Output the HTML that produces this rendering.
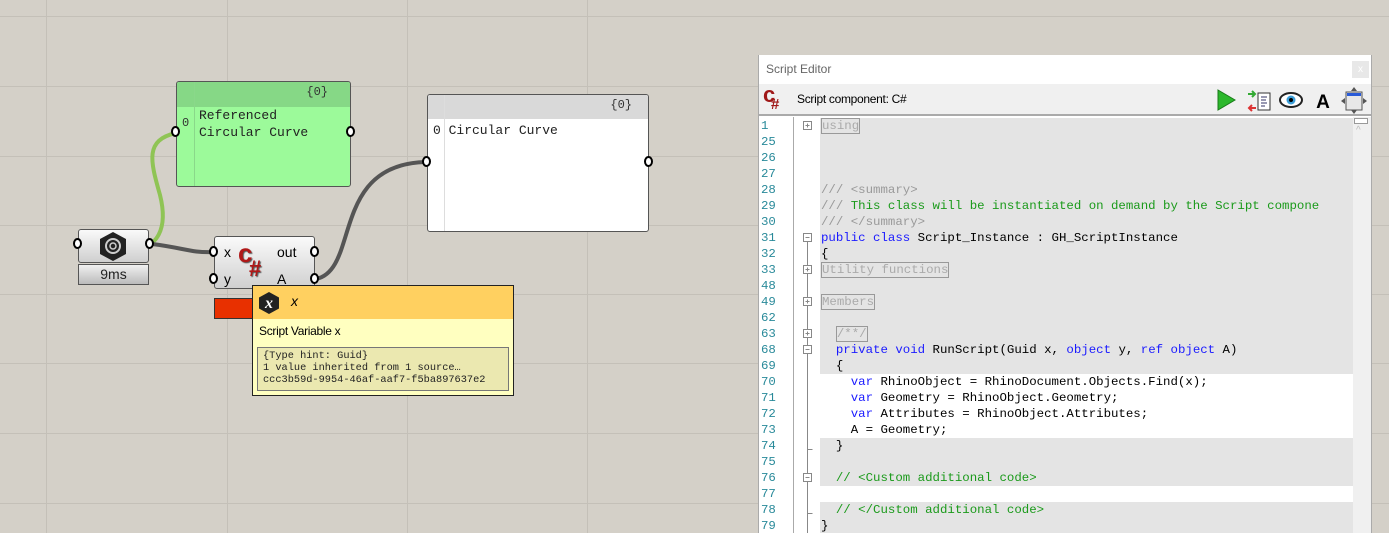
<!DOCTYPE html>
<html><head><style>
*{margin:0;padding:0;box-sizing:border-box}
html,body{width:1389px;height:533px;overflow:hidden}
body{background:#d4d0c8;position:relative;font-family:"Liberation Sans",sans-serif}
.a{position:absolute}
.mono{font-family:"Liberation Mono",monospace}
.code{position:absolute;left:820px;top:118px;width:533px;height:415px;overflow:hidden;font-family:"Liberation Mono",monospace;font-size:12.4px;line-height:16px;color:#000}
.code div{height:16px;background:#e4e4e4;padding-left:1px;white-space:pre;overflow:hidden}
.code div.w{background:#fff}
.ln{position:absolute;left:761px;top:118px;font-family:"Liberation Mono",monospace;font-size:12.4px;line-height:16px;color:#2a8a9a;white-space:pre}
.k{color:#1a1aff}.c{color:#1a9a1a}.g{color:#999}
.box{border:1px solid #999;color:#aaa}
.port{position:absolute;width:9px;height:11px;border:2px solid #000;border-radius:50%;background:#fff}
</style></head><body>
<div class="a" style="left:0;top:16px;width:1389px;height:1px;background:#c4c0b8"></div>
<div class="a" style="left:0;top:86px;width:1389px;height:1px;background:#c4c0b8"></div>
<div class="a" style="left:0;top:156px;width:1389px;height:1px;background:#c4c0b8"></div>
<div class="a" style="left:0;top:225px;width:1389px;height:1px;background:#c4c0b8"></div>
<div class="a" style="left:0;top:294px;width:1389px;height:1px;background:#c4c0b8"></div>
<div class="a" style="left:0;top:363px;width:1389px;height:1px;background:#c4c0b8"></div>
<div class="a" style="left:0;top:433px;width:1389px;height:1px;background:#c4c0b8"></div>
<div class="a" style="left:0;top:503px;width:1389px;height:1px;background:#c4c0b8"></div>
<div class="a" style="left:46px;top:0;width:1px;height:533px;background:#c4c0b8"></div>
<div class="a" style="left:227px;top:0;width:1px;height:533px;background:#c4c0b8"></div>
<div class="a" style="left:407px;top:0;width:1px;height:533px;background:#c4c0b8"></div>
<div class="a" style="left:587px;top:0;width:1px;height:533px;background:#c4c0b8"></div>

<svg class="a" style="left:0;top:0" width="760" height="533">
<path d="M176 133 C145 140 150 160 160 195 C170 235 150 244 150 244" stroke="#8fc455" stroke-width="4" fill="none"/>
<path d="M152 244 C185 248 190 253 214 252" stroke="#555" stroke-width="4" fill="none"/>
<path d="M316 279 C360 270 330 165 425 162" stroke="#555" stroke-width="4" fill="none"/>
</svg>

<div class="a" style="left:176px;top:81px;width:175px;height:106px;background:#9cfa9a;border:1px solid #555;border-radius:3px;overflow:hidden">
 <div style="height:25px;background:#86d886;text-align:right;padding-right:22px;font:12px 'Liberation Mono',monospace;line-height:20px;color:#333">{0}</div>
 <div class="a" style="left:17px;top:0;width:1px;height:106px;background:#8ad88a"></div>
 <div class="a mono" style="left:5px;top:34px;font-size:12px;color:#333">0</div>
 <div class="a mono" style="left:22px;top:25px;font-size:13px;line-height:17px;color:#222">Referenced<br>Circular Curve</div>
</div>
<div class="port" style="left:171px;top:126px"></div>
<div class="port" style="left:346px;top:126px"></div>

<div class="a" style="left:427px;top:94px;width:222px;height:138px;background:#fff;border:1px solid #555;border-radius:3px;overflow:hidden">
 <div style="height:24px;background:#d9d9d9;text-align:right;padding-right:16px;font:12px 'Liberation Mono',monospace;line-height:20px;color:#333">{0}</div>
 <div class="a" style="left:16px;top:0;width:1px;height:138px;background:#ddd"></div>
 <div class="a mono" style="left:5px;top:28px;font-size:13px;color:#222">0 Circular Curve</div>
</div>
<div class="port" style="left:422px;top:156px"></div>
<div class="port" style="left:644px;top:156px"></div>

<div class="a" style="left:78px;top:229px;width:71px;height:34px;background:linear-gradient(#fafafa,#cfcfcf);border:1px solid #555;border-radius:3px"></div>
<svg class="a" style="left:96px;top:230px" width="34" height="34"><polygon points="17,2 30,9 30,24 17,31 4,24 4,9" fill="#222"/><circle cx="17" cy="16" r="7" fill="none" stroke="#ccc" stroke-width="2"/><circle cx="17" cy="16" r="3" fill="none" stroke="#ccc" stroke-width="1.5"/></svg>
<div class="a" style="left:78px;top:264px;width:71px;height:21px;background:linear-gradient(#f0f0f0,#bbb);border:1px solid #555;text-align:center;font-size:14px;line-height:19px;color:#222">9ms</div>
<div class="port" style="left:73px;top:238px"></div>
<div class="port" style="left:145px;top:238px"></div>

<div class="a" style="left:214px;top:236px;width:101px;height:53px;background:linear-gradient(#fafafa,#d0d0d0);border:1px solid #555;border-radius:3px"></div>
<div class="a" style="left:224px;top:244px;font-size:14px">x</div>
<div class="a" style="left:224px;top:271px;font-size:14px">y</div>
<div class="a" style="left:277px;top:244px;font-size:14px">out</div>
<div class="a" style="left:277px;top:271px;font-size:14px">A</div>
<div class="a" style="left:238px;top:238px;font:bold 26px 'Liberation Sans';color:#b01818;text-shadow:1px 1px 1px #555">c</div>
<div class="a" style="left:249px;top:256px;font:bold 22px 'Liberation Sans';color:#b01818;text-shadow:1px 1px 1px #555">#</div>
<div class="port" style="left:209px;top:246px"></div>
<div class="port" style="left:209px;top:273px"></div>
<div class="port" style="left:310px;top:246px"></div>
<div class="port" style="left:310px;top:273px"></div>
<div class="a" style="left:214px;top:298px;width:50px;height:21px;background:#e83000;border:1px solid #333"></div>

<div class="a" style="left:252px;top:285px;width:262px;height:111px;background:#ffffc0;border:1px solid #222">
 <div style="height:33px;background:#ffd060"></div>
 <svg class="a" style="left:4px;top:5px" width="24" height="24"><polygon points="12,1 22,6.5 22,17.5 12,23 2,17.5 2,6.5" fill="#222"/><text x="12" y="17" text-anchor="middle" font-family="Liberation Serif" font-style="italic" font-weight="bold" font-size="16" fill="#fff">x</text></svg>
 <div class="a" style="left:38px;top:7px;font-style:italic;font-size:14px">x</div>
 <div class="a" style="left:6px;top:38px;font-size:12px;letter-spacing:-0.3px">Script Variable x</div>
 <div class="a mono" style="left:4px;top:61px;width:252px;height:44px;background:#ebe8b0;border:1px solid #777;font-size:10.3px;line-height:12px;padding:2px 5px;white-space:pre;color:#222">{Type hint: Guid}
1 value inherited from 1 source…
ccc3b59d-9954-46af-aaf7-f5ba897637e2</div>
</div>

<div class="a" style="left:758px;top:55px;width:614px;height:478px;background:#fff;border-left:1px solid #aaa;border-right:1px solid #aaa"></div>
<div class="a" style="left:766px;top:62px;font-size:12px;color:#666">Script Editor</div>
<div class="a" style="left:1352px;top:61px;width:17px;height:17px;background:#e8e8e8;color:#fff;font-size:10px;text-align:center;line-height:17px">x</div>
<div class="a" style="left:759px;top:84px;width:612px;height:32px;background:#f0f0f0;border-bottom:2px solid #aaa"></div>
<div class="a" style="left:763px;top:82px;font:bold 22px 'Liberation Sans';color:#a01818">c</div>
<div class="a" style="left:771px;top:96px;font:bold 15px 'Liberation Sans';color:#a01818">#</div>
<div class="a" style="left:797px;top:92px;font-size:12px;letter-spacing:-0.3px">Script component: C#</div>
<svg class="a" style="left:1214px;top:86px" width="160" height="28">
 <polygon points="4,4 21,14 4,24" fill="#2cb82c" stroke="#1a7a1a"/>
 <rect x="44" y="7" width="12" height="17" fill="#fff" stroke="#333"/>
 <path d="M47 11h6M47 14h5M47 17h6M47 20h4" stroke="#336"/>
 <path d="M34 8h7M38 5l3 3-3 3" stroke="#3a3" stroke-width="2" fill="none"/>
 <path d="M42 22h-7M38 19l-3 3 3 3" stroke="#d33" stroke-width="2" fill="none"/>
 <ellipse cx="77" cy="14" rx="11" ry="7" fill="#fff" stroke="#222" stroke-width="2"/>
 <circle cx="77" cy="14" r="4.5" fill="#3b9ed8"/><circle cx="77" cy="14" r="2" fill="#000"/>
 <text x="109" y="22" text-anchor="middle" font-family="Liberation Sans" font-weight="bold" font-size="19">A</text>
 <rect x="132" y="6" width="16" height="18" fill="#e8e8e8" stroke="#555"/><rect x="133" y="7" width="14" height="3" fill="#2a5bd8"/>
 <path d="M140 1l-3 4h6zM140 28l-3-4h6zM127 15l4-3v6zM153 15l-4-3v6z" fill="#555"/>
</svg>
<div class="a" style="left:793px;top:117px;width:1px;height:416px;background:#aaa"></div>
<div class="a" style="left:1353px;top:117px;width:18px;height:416px;background:#f0f0f0"></div>
<div class="a" style="left:1354px;top:118px;width:14px;height:6px;border:1px solid #999;background:#fff"></div>
<div class="a" style="left:1356px;top:125px;font-size:10px;color:#bbb">^</div>
<svg class="a" style="left:803px;top:118px" width="12" height="415" fill="none" stroke="#888">
 <rect x="0.5" y="3.5" width="8" height="8" fill="#fff"/><path d="M2.5 7.5h4M4.5 5.5v4"/>
 <rect x="0.5" y="115.5" width="8" height="8" fill="#fff"/><path d="M2.5 119.5h4"/><path d="M4.5 124v291"/>
 <rect x="0.5" y="147.5" width="8" height="8" fill="#fff"/><path d="M2.5 151.5h4M4.5 149.5v4"/>
 <rect x="0.5" y="179.5" width="8" height="8" fill="#fff"/><path d="M2.5 183.5h4M4.5 181.5v4"/>
 <rect x="0.5" y="211.5" width="8" height="8" fill="#fff"/><path d="M2.5 215.5h4M4.5 213.5v4"/>
 <rect x="0.5" y="227.5" width="8" height="8" fill="#fff"/><path d="M2.5 231.5h4"/>
 <path d="M4.5 331.5h5"/>
 <rect x="0.5" y="355.5" width="8" height="8" fill="#fff"/><path d="M2.5 359.5h4"/>
 <path d="M4.5 395.5h5"/>
</svg>
<div class="ln">1
25
26
27
28
29
30
31
32
33
48
49
62
63
68
69
70
71
72
73
74
75
76
77
78
79</div>
<div class="code"><div><span class="box">using</span></div><div> </div><div> </div><div> </div><div><span class="g">/// &lt;summary&gt;</span></div><div><span class="g">///</span> <span class="c">This class will be instantiated on demand by the Script compone</span></div><div><span class="g">/// &lt;/summary&gt;</span></div><div><span class="k">public class</span> Script_Instance : GH_ScriptInstance</div><div>{</div><div><span class="box">Utility functions</span></div><div> </div><div><span class="box">Members</span></div><div> </div><div>  <span class="box">/**/</span></div><div>  <span class="k">private void</span> RunScript(Guid x, <span class="k">object</span> y, <span class="k">ref object</span> A)</div><div>  {</div><div class="w">    <span class="k">var</span> RhinoObject = RhinoDocument.Objects.Find(x);</div><div class="w">    <span class="k">var</span> Geometry = RhinoObject.Geometry;</div><div class="w">    <span class="k">var</span> Attributes = RhinoObject.Attributes;</div><div class="w">    A = Geometry;</div><div>  }</div><div> </div><div>  <span class="c">// &lt;Custom additional code&gt;</span></div><div class="w"> </div><div>  <span class="c">// &lt;/Custom additional code&gt;</span></div><div>}</div></div>
</body></html>
